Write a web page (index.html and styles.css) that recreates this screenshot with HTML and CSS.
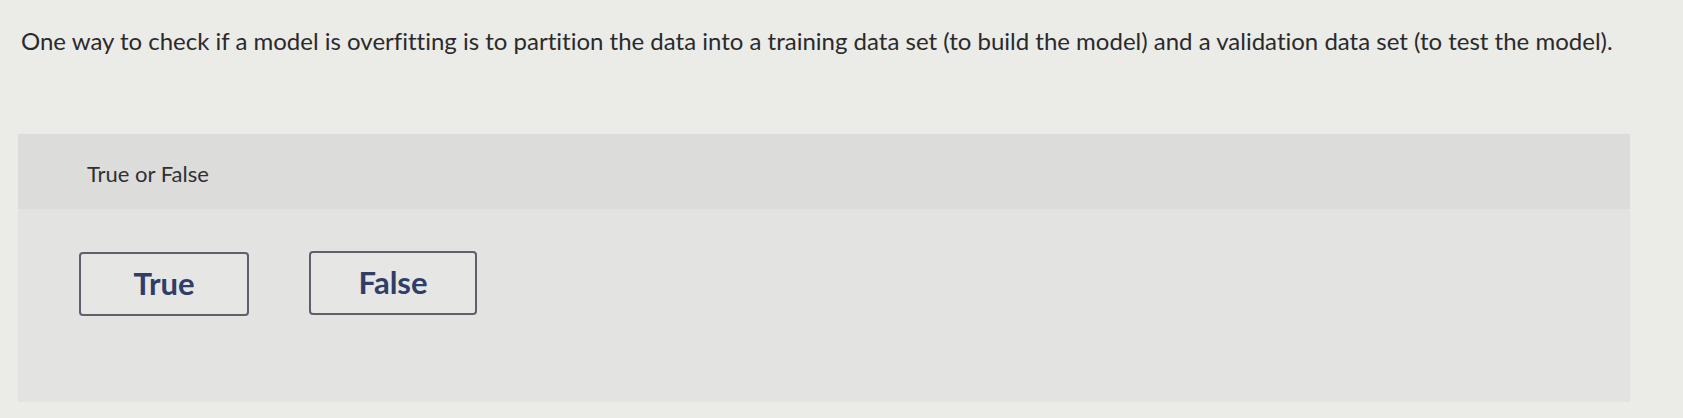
FILE: index.html
```html
<!DOCTYPE html>
<html>
<head>
<meta charset="utf-8">
<link rel="stylesheet" href="styles.css">
</head>
<body>
<p class="question">One way to check if a model is overfitting is to partition the data into a training data set (to build the model) and a validation data set (to test the model).</p>
<section class="panel">
  <div class="panel-header">True or False</div>
  <div class="panel-body">
    <button class="choice choice-true">True</button>
    <button class="choice choice-false">False</button>
  </div>
</section>
</body>
</html>
```
FILE: styles.css
```css
html, body {
  margin: 0;
  padding: 0;
}
body {
  width: 1683px;
  height: 418px;
  overflow: hidden;
  background: #ebebe8;
  font-family: Lato, "Open Sans", "Liberation Sans", sans-serif;
  font-variant-ligatures: none;
  color: #2a2a2c;
}
.question {
  margin: 0;
  padding: 26px 0 0 21px;
  font-size: 24px;
  line-height: 30px;
  white-space: nowrap;
}
.panel {
  margin: 78px 53px 0 18px;
  background: #e3e3e1;
  height: 268px;
}
.panel-header {
  height: 75px;
  background: #dcdcda;
  display: flex;
  align-items: center;
  padding-left: 69px;
  padding-top: 3px;
  box-sizing: border-box;
  font-size: 22px;
  color: #303033;
}
.panel-body {
  display: flex;
  align-items: flex-start;
  gap: 60px;
  padding: 43px 0 0 61px;
}
.choice {
  font-family: inherit;
  font-size: 31px;
  font-weight: 700;
  color: #2f3d68;
  background: #e6e6e4;
  border: 2px solid #5d606c;
  border-radius: 4px;
  height: 64px;
  padding: 0 0 2px;
  display: flex;
  align-items: center;
  justify-content: center;
}
.choice-true {
  width: 170px;
}
.choice-false {
  width: 168px;
  margin-top: -1px;
}
```
